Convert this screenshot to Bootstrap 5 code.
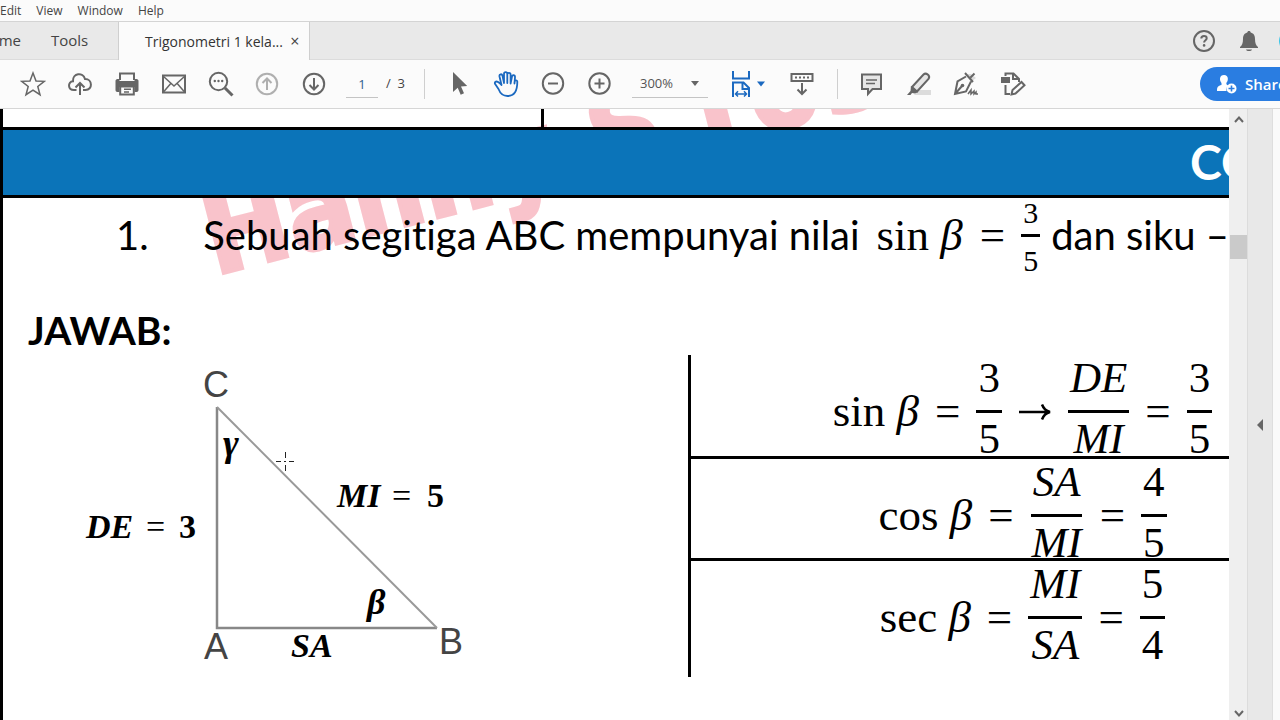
<!DOCTYPE html>
<html lang="id">
<head>
<meta charset="utf-8">
<meta name="viewport" content="width=device-width, initial-scale=1">
<title>Trigonometri 1 kelas X</title>
<link href="https://cdn.jsdelivr.net/npm/bootstrap@5.3.0/dist/css/bootstrap.min.css" rel="stylesheet">
<style>
  body { font-family: "Open Sans", "Noto Sans", sans-serif; color: #444; background: #fbfbfb; }
  a { color: inherit; text-decoration: none; }
  .menu-strip { height: 22px; gap: 15px; font-size: 12px; border-bottom: 1px solid #d4d4d4; }
  .tab-strip { height: 38px; font-size: 15px; background: #e9e9e9; }
  .tab-strip > * { border-bottom: 1px solid #dcdcdc; }
  .tab-home { width: 21px; }
  .tab-tools { padding-left: 30px; width: 97px; }
  .tab-file { width: 192px; font-size: 14px; background: #fbfbfb; border: 1px solid #cfcfcf; border-width: 0 1px; padding-left: 26px; color: #333; }
  .tab-file button { font-size: 16px; line-height: 16px; width: 24px; color: #444; }
  .tool-strip { height: 49px; padding-left: 9px; border-bottom: 1px solid #d6d6d6; font-size: 13px; }
  .tool { width: 47px; height: 40px; }
  .plain { border: 0; background: none; padding: 0; display: flex; align-items: center; justify-content: center; flex-shrink: 0; }
  .ink { fill: none; stroke: #666; stroke-width: 2; }
  .ink-thin { stroke-width: 1.5; }
  .ink-bold { stroke-width: 3; }
  .ink-pale { fill: #e6e6e6; }
  .ink-paper { fill: #fbfbfb; }
  .page-box { width: 32px; height: 28px; margin-left: 8px; border: 0; border-bottom: 1px solid #c4c4c4; background: none; text-align: center; padding: 0; color: #2f5f8f; }
  .zoom-box { width: 76px; height: 28px; border: 0; border-bottom: 1px solid #c4c4c4; border-radius: 0; padding: 0 0 0 8px; color: #555; appearance: none;
    background: url("data:image/svg+xml,%3Csvg xmlns='http://www.w3.org/2000/svg' width='8' height='5'%3E%3Cpath d='M0 0h8L4 5z' fill='%23666'/%3E%3C/svg%3E") no-repeat right 9px center; }
  .rule { width: 1px; height: 30px; margin: 0 11px; background: #cfcfcf; }
  .share { width: 100px; height: 34px; margin-right: -20px; border-radius: 17px; background: #2a7de1; color: #fff; font-size: 15px; font-weight: 600; gap: 8px; padding: 0 0 0 16px; }
  .sheet { background: #fff; color: #000; border-left: 3px solid #000; font-family: Lato, sans-serif; font-variant-ligatures: none; font-size: 40px; line-height: 48px; min-width: 0; }
  .watermark { top: 0; left: 0; font-family: "DejaVu Sans Condensed", "DejaVu Sans", sans-serif; font-stretch: condensed; font-weight: bold; font-size: 111px; fill: #f9c3cb; stroke: #f9c3cb; stroke-width: 4; }
  .cell-strip { height: 18px; }
  .cell-strip div { width: 541px; border-right: 3px solid #000; }
  .band { height: 71px; background: #0b74b9; border: solid #000; border-width: 3px 0; color: #fff; font-weight: bold; font-size: 48px; line-height: 64px; }
  .band h1 { font: inherit; margin: 0; width: 39px; white-space: nowrap; }
  .question { height: 86px; padding: 0 0 12px 113px; white-space: nowrap; }
  .question .num { width: 88px; }
  .question .maths { margin-left: 17px; }
  .answer { font-size: 39px; line-height: 48px; font-weight: bold; padding: 22px 0 0 25px; }
  .maths { font-family: "Liberation Serif", serif; font-size: 45px; line-height: 48px; }
  .split { font-family: "Liberation Serif", serif; display: inline-flex; flex-direction: column; align-items: center; line-height: 46px; font-size: 43px; }
  .split > span { padding: 0 2px; }
  .split > span:first-child { height: 58px; border-bottom: 3px solid #000; }
  .split > span:last-child { height: 41px; padding-top: 3px; }
  .split.little { font-size: 30px; line-height: 30px; margin: 4px 11px 0 16px; }
  .split.little > span:first-child { height: 39px; }
  .split.little > span:last-child { height: 39px; padding-top: 9px; }
  .figure-side { flex: 0 0 685px; }
  .ratios { border-left: 3px solid #000; border-collapse: collapse; align-self: flex-start; margin-top: 1px; }
  .ratios td { height: 102px; padding: 0 0 0 125px; border-bottom: 3px solid #000; vertical-align: top; }
  .ratios tr:last-child td { height: 118px; border: 0; }
  .ratios .line { gap: 16px; height: 99px; }
  .ratios .line > span:not(.split) { margin-top: 32px; }
  .ratios .line > svg { margin-top: 47px; }
  .bar { width: 18px; background: #efefef; padding-left: 1px; }
  .thumb { width: 17px; height: 24px; background: #cacaca; margin-top: 106px; }
  .bar .plain { width: 17px; height: 20px; }
  .bar .plain:last-child { height: 13px; }
  .gutter { width: 25px; padding-top: 20px; background: #e8e8e8; border-left: 1px solid #dcdcdc; }
  .edge { width: 8px; background: #fafafa; border-left: 1px solid #dedede; }
</style>
</head>
<body class="d-flex flex-column vh-100 overflow-hidden">

<nav class="menu-strip d-flex align-items-center flex-shrink-0" aria-label="Menu">
  <a href="#">Edit</a><a href="#">View</a><a href="#">Window</a><a href="#">Help</a>
</nav>

<div class="tab-strip d-flex flex-shrink-0">
  <a href="#" class="tab-home d-flex justify-content-end align-items-center overflow-hidden">Home</a>
  <a href="#" class="tab-tools d-flex align-items-center">Tools</a>
  <div class="tab-file d-flex align-items-center"><span>Trigonometri 1 kela...</span>
    <button class="plain" type="button" aria-label="Tutup">×</button></div>
  <div class="flex-grow-1 d-flex align-items-center justify-content-end overflow-hidden">
    <button class="plain" type="button" aria-label="Bantuan"><svg width="24" height="24" viewBox="0 0 24 24"><circle class="ink" cx="13" cy="12" r="10"/><path class="ink" d="M10.300 9.600c0-3.600 5.400-3.300 5.400-.3 0 2-2.600 2-2.600 4.300"/><circle cx="13.100" cy="16.400" r="1.300" fill="#666"/></svg></button>
    <button class="plain ms-4" type="button" aria-label="Notifikasi"><svg width="20" height="24" viewBox="0 0 20 24"><path fill="#666" d="M10 2c1 0 1.700.6 1.700 1.600C15 4.400 16 7 16 10c0 4 1 6.500 3 8v1H1v-1c2-1.500 3-4 3-8 0-3 1-5.600 4.300-6.400C8.300 2.600 9 2 10 2zM7 20.500h6c-.6 2-5.400 2-6 0z"/></svg></button>
    <svg class="ms-3 flex-shrink-0" width="5" height="24"><circle cx="15" cy="12" r="11" fill="#35c5e8"/></svg>
  </div>
</div>

<div class="tool-strip d-flex align-items-center flex-shrink-0 overflow-hidden">
  <button class="plain tool" type="button" aria-label="Bintang"><svg width="26" height="26" viewBox="0 0 26 26"><path class="ink ink-thin" d="M13 2l3 7.900 8.300.400-6.500 5.200 2.200 8.200L13 19.100l-7 4.600 2.200-8.200L1.700 10.300l8.300-.400z"/></svg></button>
  <button class="plain tool" type="button" aria-label="Unggah"><svg width="26" height="26" viewBox="0 0 26 26"><path class="ink" d="M9.500 19H7c-6.300 0-6.600-8.300-1-8.700C5.500 2 16 .8 18 8c7.600-.2 8 11 .5 11H16M13 24V12m-4.500 4.500L13 12l4.500 4.500"/></svg></button>
  <button class="plain tool" type="button" aria-label="Cetak"><svg width="26" height="26" viewBox="0 0 26 26"><path class="ink" d="M6 9V2.500h14V9"/><path fill="#666" d="M3.500 8h2v2h15V8h2c1.300 0 2 1 2 2v9c0 1.300-.7 2-2 2h-2v-5h-15v5h-2c-1.300 0-2-.7-2-2v-9c0-1 .7-2 2-2z"/><path class="ink" d="M6.200 15.500h13.600v8H6.200z"/><path class="ink ink-thin" d="M10 18.200h7M10 21h5"/></svg></button>
  <button class="plain tool" type="button" aria-label="Surel"><svg width="26" height="26" viewBox="0 0 26 26"><path class="ink" d="M2 4.500h22v17H2z"/><path class="ink ink-thin" d="M2 5l11 10L24 5M2 21.500L10 12.300M24 21.500L16 12.300"/></svg></button>
  <button class="plain tool" type="button" aria-label="Cari"><svg width="26" height="26" viewBox="0 0 26 26"><circle class="ink" cx="10.500" cy="10.500" r="8.700"/><path class="ink ink-bold" d="M17 17l7.500 7.500"/><g fill="#666"><circle cx="6.800" cy="10" r="1.200"/><circle cx="10.500" cy="10" r="1.200"/><circle cx="14.200" cy="10" r="1.200"/></g></svg></button>
  <button class="plain tool opacity-50" type="button" aria-label="Halaman sebelumnya"><svg width="26" height="26" viewBox="0 0 26 26"><circle class="ink" cx="12" cy="13" r="10.200"/><path class="ink" d="M12 19V7.500M7.500 12L12 7.500l4.500 4.500"/></svg></button>
  <button class="plain tool" type="button" aria-label="Halaman berikutnya"><svg width="26" height="26" viewBox="0 0 26 26"><circle class="ink" cx="12" cy="13" r="10.200"/><path class="ink" d="M12 7v11.500M7.500 14l4.500 4.500 4.500-4.500"/></svg></button>
  <input class="page-box flex-shrink-0" type="text" value="1" aria-label="Halaman">
  <span class="ms-2 me-2 flex-shrink-0">/&nbsp; 3</span>
  <div class="rule flex-shrink-0"></div>
  <button class="plain tool" type="button" aria-label="Pilih"><svg width="26" height="26" viewBox="0 0 26 26"><path fill="#666" d="M7 1v20l4.700-4.300 3 7 3.300-1.400-3-6.800 6.200-.5z"/></svg></button>
  <button class="plain tool" type="button" aria-label="Tangan"><svg width="26" height="26" viewBox="0 0 26 26"><path fill="none" stroke="#1b69c0" stroke-width="1.800" stroke-linejoin="round" stroke-linecap="round" d="M8.500 14L6.500 5.500c-.5-2.500 2.400-3 3-.8L11 12V3c0-2.400 3.300-2.400 3.300 0v9V3.600c0-2.300 3.300-2.200 3.300.2V12.500L19 5.600c.5-2.200 3.300-1.600 3 .6L21.500 12.500v-1.500c.3-2.300 2.900-2.300 2.800 0C24.300 19 22 25 14.500 25 9 25 7 22 5.500 18L2.300 13.300c-1.300-2 .5-3.300 2.500-2.500 1.500.6 2.500 1.700 3.700 3.200"/></svg></button>
  <button class="plain tool" type="button" aria-label="Perkecil"><svg width="26" height="26" viewBox="0 0 26 26"><circle class="ink" cx="13" cy="12.500" r="10.200"/><path class="ink" d="M8 12.500h10"/></svg></button>
  <button class="plain tool" type="button" aria-label="Perbesar"><svg width="26" height="26" viewBox="0 0 26 26"><circle class="ink" cx="12.500" cy="12.500" r="10.200"/><path class="ink" d="M7.500 12.500h10M12.500 7.500v10"/></svg></button>
  <select class="zoom-box ms-2 flex-shrink-0" aria-label="Pembesaran"><option>300%</option></select>
  <button class="plain tool ms-3" type="button" aria-label="Sesuaikan lebar"><svg width="36" height="28" viewBox="0 0 36 28"><g fill="none" stroke="#1b69c0" stroke-width="2"><path d="M4 1v7.500h16V1M4 27V12.500h10.500L20 18v9M13.500 12.500V19H20"/><path stroke-width="1.500" d="M6.500 24h11M9 21.300L6.500 24 9 26.500M15 21.300l2.500 2.700-2.500 2.500"/></g><path fill="#1b69c0" d="M28 11.500h8L32 16.500z"/></svg></button>
  <button class="plain tool ms-2" type="button" aria-label="Gulir"><svg width="26" height="26" viewBox="0 0 26 26"><path class="ink" d="M2.500 3h21v7h-21zM13 12v11M8.500 18.500L13 23l4.500-4.500"/><path class="ink" stroke-dasharray="2 2" d="M6 6.500h14"/></svg></button>
  <div class="rule flex-shrink-0"></div>
  <button class="plain tool" type="button" aria-label="Komentar"><svg width="26" height="26" viewBox="0 0 26 26"><path class="ink ink-pale" d="M3 3.500h19v14.500H13.500l-4.500 5V18H3z"/><path class="ink ink-thin" d="M7 9h11M7 12.500h9"/></svg></button>
  <button class="plain tool" type="button" aria-label="Sorot"><svg width="26" height="26" viewBox="0 0 26 26"><path fill="#dcdcdc" d="M12 19h13v5H8z"/><path class="ink ink-pale" d="M6 16L17.500 3.500c2.500-2.300 7.300 1 5 4.500L11 20.500z"/><path fill="#666" d="M5 15l7 6-3 1.500-3-.5-1.500 2H1l3.500-4z"/></svg></button>
  <button class="plain tool" type="button" aria-label="Tanda tangan"><svg width="26" height="26" viewBox="0 0 26 26"><path fill="#dcdcdc" d="M14 3l4 0 5 4-4 3z"/><path class="ink" d="M12 2l8 9M21.500 2.500l-4 4M13 5.500L4.500 10.500 2 23l11-2.500 5-10M2 23l7-8"/><circle cx="9.500" cy="14.500" r="1.800" fill="#666"/><path class="ink ink-thin" d="M15 23l3-4v4l3-3v3l2-2v2h2"/></svg></button>
  <button class="plain tool" type="button" aria-label="Edit halaman"><svg width="26" height="26" viewBox="0 0 26 26"><path class="ink" d="M5.500 5V2.500h8L19 8v3M13 2.500V8h6M5.500 14v9H10"/><path fill="#666" d="M1 6h9v6H1z"/><path class="ink ink-paper" d="M11.500 23.500l1-4.500 9-8 3 3.200-9 8.300z"/></svg></button>
  <button class="plain share ms-auto justify-content-start" type="button"><svg width="21" height="20" viewBox="0 0 21 20"><path fill="#fff" d="M8 1c5 0 4.500 6 2.300 8 0 2 1 2 2.200 2.500-2 1.500-2.500 3-2 5.500H1c0-4.500 1-5 4.500-6V9C3 6 3.500 1 8 1z"/><circle cx="15.500" cy="14.500" r="5" fill="#fff"/><path stroke="#2a7de1" stroke-width="1.600" d="M12.500 14.500h6M15.500 11.500v6"/></svg>Share</button>
</div>

<main class="d-flex flex-grow-1 overflow-hidden">
  <section class="sheet flex-grow-1 position-relative overflow-hidden">
    <svg class="watermark position-absolute" width="1000" height="200" aria-hidden="true"><g transform="translate(212 166) rotate(-14.500)"><text>Hanny</text><text x="397">S</text><text x="492">T</text><text x="561">o</text><text x="634">s</text></g></svg>
    <div class="position-relative">
      <div class="cell-strip d-flex"><div></div></div>
      <div class="band d-flex justify-content-end"><h1>CO</h1></div>
      <div class="question d-flex align-items-center">
        <span class="num">1.</span><span>Sebuah segitiga ABC mempunyai nilai</span>
        <span class="maths">sin <i>β</i></span><span class="maths">=</span>
        <span class="split little"><span>3</span><span>5</span></span>
        <span>dan siku –</span>
      </div>
      <h2 class="answer mb-0">JAWAB:</h2>
      <div class="d-flex">
        <div class="figure-side">
          <svg class="d-block" width="480" height="320" viewBox="3 354 480 320" font-family="Liberation Serif, serif" font-weight="bold" font-size="34">
            <g stroke="#888" stroke-width="2.500" fill="none"><path d="M217 407V628H437"/><path stroke-width="2" stroke="#999" d="M217 407L437 628"/></g>
            <g font-family="Liberation Sans, sans-serif" font-weight="normal" font-size="36" fill="#444"><text x="203" y="397">C</text><text x="204" y="659">A</text><text x="439" y="654">B</text></g>
            <g font-style="italic"><text x="223" y="456" font-size="38">γ</text><text x="367" y="614" font-size="36">β</text><text x="86" y="538">DE</text><text x="337" y="507">MI</text><text x="291" y="657">SA</text></g>
            <text x="146" y="538" font-weight="normal">=</text><text x="179" y="538">3</text>
            <text x="392" y="507" font-weight="normal">=</text><text x="427" y="507">5</text>
            <path stroke="#222" stroke-width="1" fill="none" d="M276 461.500h5M289 461.500h5M284 461.500h2M285.500 452v6M285.500 465v6"/>
          </svg>
        </div>
        <table class="ratios maths flex-grow-1">
          <tr><td><div class="line d-flex justify-content-center align-items-start"><span>sin <i>β</i></span><span>=</span><span class="split"><span>3</span><span>5</span></span><svg width="34" height="20" viewBox="0 0 34 20"><path fill="none" stroke="#000" stroke-width="2.500" d="M1 10h30M24 2.500c1.500 4 4 6.500 8 7.500-4 1-6.500 3.500-8 7.500"/></svg><span class="split"><span><i>DE</i></span><span><i>MI</i></span></span><span>=</span><span class="split"><span>3</span><span>5</span></span></div></td></tr>
          <tr><td><div class="line d-flex justify-content-center align-items-start"><span>cos <i>β</i></span><span>=</span><span class="split"><span><i>SA</i></span><span><i>MI</i></span></span><span>=</span><span class="split"><span>4</span><span>5</span></span></div></td></tr>
          <tr><td><div class="line d-flex justify-content-center align-items-start"><span>sec <i>β</i></span><span>=</span><span class="split"><span><i>MI</i></span><span><i>SA</i></span></span><span>=</span><span class="split"><span>5</span><span>4</span></span></div></td></tr>
        </table>
      </div>
    </div>
  </section>
  <div class="bar d-flex flex-column flex-shrink-0">
    <button class="plain" type="button" aria-label="Gulir ke atas"><svg width="10" height="7"><path class="ink" d="M1 6l4-4.500L9 6"/></svg></button>
    <div class="thumb"></div>
    <button class="plain mt-auto" type="button" aria-label="Gulir ke bawah"><svg width="10" height="7"><path class="ink" d="M1 1l4 4.500L9 1"/></svg></button>
  </div>
  <div class="gutter d-flex align-items-center justify-content-center flex-shrink-0"><button class="plain" type="button" aria-label="Buka panel"><svg width="8" height="14"><path fill="#666" d="M7 1v12L1 7z"/></svg></button></div>
  <div class="edge flex-shrink-0"></div>
</main>
<script src="https://cdn.jsdelivr.net/npm/bootstrap@5.3.0/dist/js/bootstrap.bundle.min.js"></script>
</body>
</html>
